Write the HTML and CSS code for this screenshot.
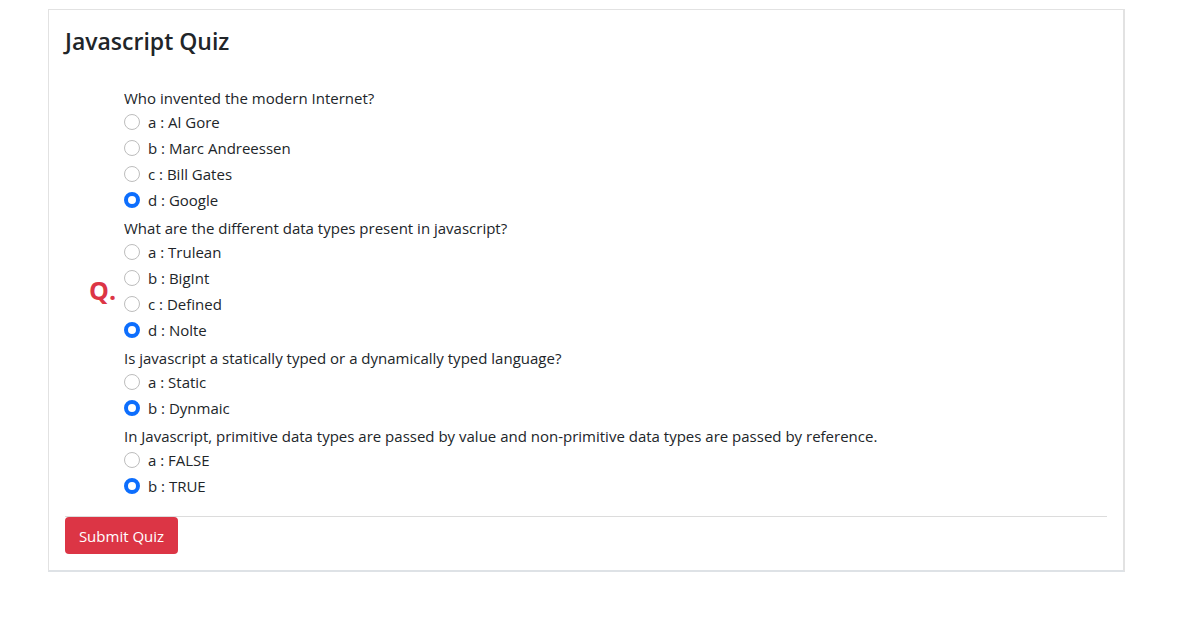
FILE: index.html
```html
<!DOCTYPE html>
<html lang="en">
<head>
<meta charset="UTF-8">
<meta name="viewport" content="width=device-width, initial-scale=1.0">
<title>Javascript Quiz</title>
<link rel="stylesheet" href="styles.css">
</head>
<body>
<div class="card">
    <div class="card-body">
        <h4 class="card-title">Javascript Quiz</h4>

        <div class="quiz-row">
            <div class="q-col">Q.</div>
            <div class="questions">
                <p class="question">Who invented the modern Internet?</p>
                <label class="option"><input type="radio" name="q1"> a : Al Gore</label>
                <label class="option"><input type="radio" name="q1"> b : Marc Andreessen</label>
                <label class="option"><input type="radio" name="q1"> c : Bill Gates</label>
                <label class="option"><input type="radio" name="q1" checked> d : Google</label>

                <p class="question">What are the different data types present in javascript?</p>
                <label class="option"><input type="radio" name="q2"> a : Trulean</label>
                <label class="option"><input type="radio" name="q2"> b : BigInt</label>
                <label class="option"><input type="radio" name="q2"> c : Defined</label>
                <label class="option"><input type="radio" name="q2" checked> d : Nolte</label>

                <p class="question">Is javascript a statically typed or a dynamically typed language?</p>
                <label class="option"><input type="radio" name="q3"> a : Static</label>
                <label class="option"><input type="radio" name="q3" checked> b : Dynmaic</label>

                <p class="question">In Javascript, primitive data types are passed by value and non-primitive data types are passed by reference.</p>
                <label class="option"><input type="radio" name="q4"> a : FALSE</label>
                <label class="option"><input type="radio" name="q4" checked> b : TRUE</label>
            </div>
        </div>

        <hr>
        <button class="btn-submit">Submit Quiz</button>
    </div>
</div>
</body>
</html>
```

FILE: styles.css
```css
body {
    margin: 0;
    font-family: "Open Sans", "Noto Sans", sans-serif;
    font-size: 15px;
    color: #212529;
    background-color: #ffffff;
}
.card {
    width: 1074px;
    margin: 9px 0 0 48px;
    border: 1px solid #e2e2e2;
    border-bottom: 2px solid #dee2e6;
    border-right: 2px solid #e2e2e2;
}
.card-body {
    padding: 16px;
}
.card-title {
    margin: 0;
    font-size: 23px;
    font-weight: 600;
    line-height: 30px;
}
.quiz-row {
    display: flex;
    align-items: center;
    margin-top: 30px;
}
.q-col {
    width: 59px;
    padding-left: 24px;
    margin-bottom: 6px;
    box-sizing: border-box;
    color: #dc3545;
    font-size: 25px;
    font-weight: 700;
}
.questions {
    flex: 1;
}
.question {
    margin: 4px 0 0 0;
    line-height: 24px;
}
.question:first-child {
    margin-top: 0;
}
.option {
    display: flex;
    align-items: center;
    height: 24px;
    margin-bottom: 2px;
}
.option input {
    appearance: none;
    -webkit-appearance: none;
    width: 16px;
    height: 16px;
    margin: 0 8px 0 0;
    border: 1px solid #bdbdbd;
    border-radius: 50%;
    box-sizing: border-box;
    background: #ffffff;
}
.option input:checked {
    border: 4px solid #0d6efd;
}
hr {
    margin: 16px 0 0 0;
    border: 0;
    border-top: 1px solid #dcdcdc;
}
.btn-submit {
    font-family: inherit;
    font-size: 15px;
    color: #ffffff;
    background-color: #dc3545;
    border: 0;
    border-radius: 4px;
    width: 113px;
    height: 37px;
    padding: 0;
}
```
